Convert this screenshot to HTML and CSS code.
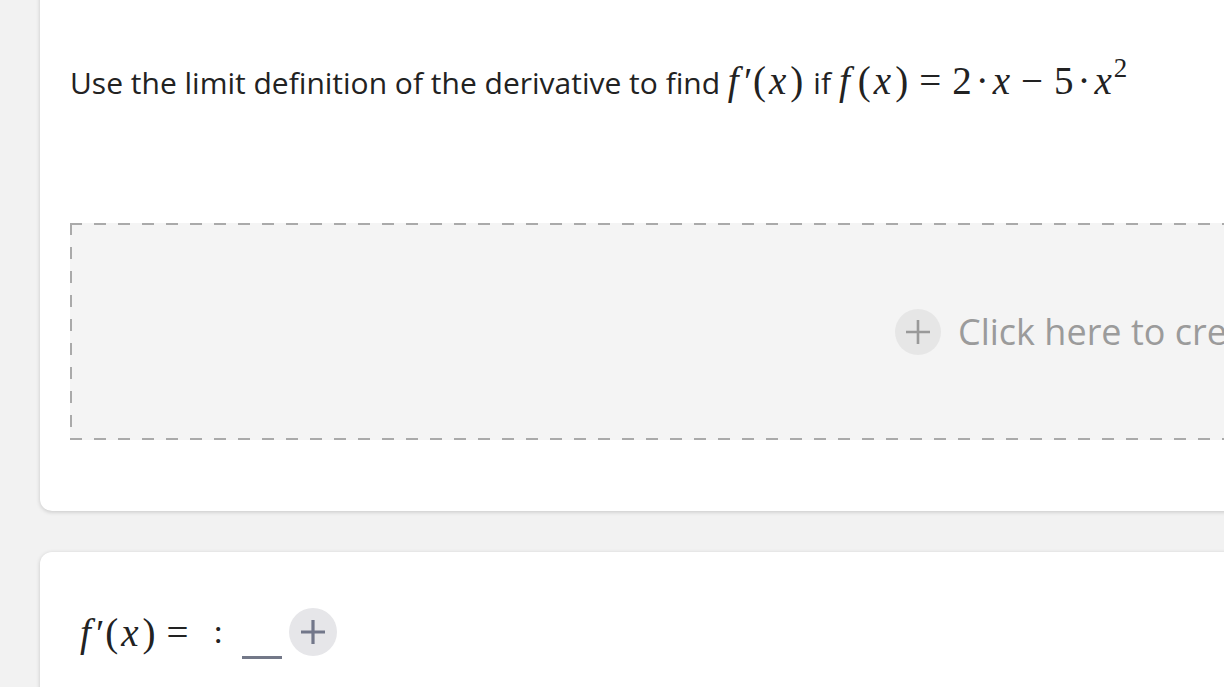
FILE: index.html
```html
<!DOCTYPE html>
<html>
<head>
<meta charset="utf-8">
<link rel="stylesheet" href="styles.css">
</head>
<body>
<div class="page">
  <section class="card card-question">
    <p class="prompt">Use the limit definition of the derivative to find <span class="math"><i class="fn">f</i><span class="prime">′</span><span class="pl">(</span><i>x</i><span class="pr">)</span></span><span class="word-if">if</span><span class="math"><i class="fn">f</i><span class="pl gap">(</span><i>x</i><span class="pr">)</span><span class="op">=</span>2<span class="dot">·</span><i>x</i><span class="op">−</span>5<span class="dot">·</span><i>x</i><sup>2</sup></span></p>
    <div class="dropzone">
      <div class="create">
        <span class="plus-circle light"><svg viewBox="0 0 46 46" width="46" height="46"><path d="M23 11v24M11 23h24" stroke="#999" stroke-width="2.6" fill="none"/></svg></span>
        <span class="create-text">Click here to create your answer</span>
      </div>
    </div>
  </section>
  <section class="card card-answer">
    <div class="answer-row">
      <span class="math"><i class="fn">f</i><span class="prime">′</span><span class="pl">(</span><i>x</i><span class="pr">)</span><span class="op">=</span></span>
      <span class="colon">:</span>
      <span class="blank"></span>
      <span class="plus-circle dark"><svg viewBox="0 0 48 48" width="48" height="48"><path d="M24 12v24M12 24h24" stroke="#72778a" stroke-width="3.2" fill="none"/></svg></span>
    </div>
  </section>
</div>
</body>
</html>
```
FILE: styles.css
```css
html, body {
  margin: 0;
  padding: 0;
  background: #f2f2f2;
  overflow: hidden;
  height: 687px;
}
.page {
  padding-left: 40px;
  width: 1500px;
  display: flex;
  flex-direction: column;
  gap: 41px;
}
.card {
  background: #fff;
  border-radius: 12px;
  box-shadow: 0 1px 4px rgba(0,0,0,0.18);
}
.card-question {
  margin-top: -30px;
  padding: 30px 0 71px 30px;
}
.prompt {
  margin: 56px 0 0 0;
  font-family: "Open Sans", sans-serif;
  font-size: 30px;
  color: #222;
  line-height: 50px;
  height: 50px;
  white-space: nowrap;
}
.word-if {
  margin: 0 8px 0 10px;
}
.math {
  font-family: "Liberation Serif", "Times New Roman", serif;
  font-size: 39px;
  color: #222;
}
.math i { font-style: italic; }
.math .fn { margin-right: 3px; }
.math .prime { margin-right: 3px; font-size: 38px; font-style: italic; }
.math .pl { margin-right: 3px; }
.math .pl.gap { margin-left: 5px; }
.math .pr { margin-left: 4px; }
.math .op { margin: 0 11px; }
.math .dot { margin: 0 4px; }
.math sup { font-size: 27px; vertical-align: 17px; line-height: 0; margin-left: 2px; }
.dropzone {
  margin-top: 117px;
  height: 217px;
  background-color: #f4f4f4;
  background-image:
    repeating-linear-gradient(90deg, #aaa 0 12px, transparent 12px 24px),
    repeating-linear-gradient(90deg, #aaa 0 12px, transparent 12px 24px),
    repeating-linear-gradient(180deg, #aaa 0 12px, transparent 12px 24px);
  background-size: 100% 2px, 100% 2px, 2px 100%;
  background-position: 0 0, 0 100%, 0 0;
  background-repeat: no-repeat;
  display: flex;
  align-items: center;
  padding-left: 825px;
}
.create {
  display: flex;
  align-items: center;
  gap: 17px;
}
.plus-circle {
  display: flex;
  align-items: center;
  justify-content: center;
  border-radius: 50%;
}
.plus-circle.light {
  width: 46px;
  height: 46px;
  background: #e6e6e6;
}
.plus-circle.dark {
  width: 48px;
  height: 48px;
  background: #e6e6e9;
  margin-left: 7px;
}
.create-text {
  font-family: "Open Sans", sans-serif;
  font-size: 36px;
  color: #9b9b9b;
  white-space: nowrap;
}
.card-answer {
  height: 200px;
  padding-left: 40px;
}
.answer-row {
  margin-top: 55px;
  display: flex;
  align-items: center;
  height: 50px;
}
.colon {
  font-family: "Liberation Serif", serif;
  font-size: 34px;
  color: #222;
  margin-left: 14px;
}
.blank {
  width: 40px;
  height: 3px;
  background: #737888;
  margin-left: 19px;
  align-self: flex-end;
  margin-bottom: -2px;
}
```
